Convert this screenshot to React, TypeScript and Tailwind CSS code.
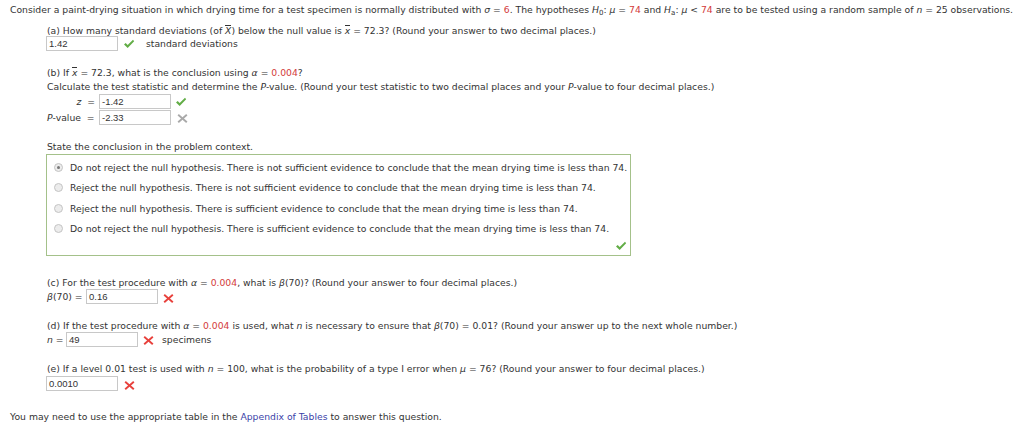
import React from "react"

const font = { fontFamily: '"DejaVu Sans", Verdana, sans-serif' }

function Check({ className = "" }: { className?: string }) {
    return (
        <svg viewBox="0 0 14 12" className={"w-[12px] h-[10px] " + className}>
            <path d="M1 6.5 L3 4.8 L5.4 7.2 L11.8 1 L13.2 2.6 L5.4 10.8 Z" fill="#62ad46" />
        </svg>
    )
}

function Cross({ red = true }: { red?: boolean }) {
    return (
        <svg viewBox="0 0 12 12" className="w-[11px] h-[11px]">
            <path d="M2 1 L6 4.6 L10 1 L11.4 2.6 L7.6 6 L11.4 9.4 L10 11 L6 7.4 L2 11 L0.6 9.4 L4.4 6 L0.6 2.6 Z" fill={red ? "#e8413c" : "#a9a9a9"} />
        </svg>
    )
}

function Input({ value }: { value: string }) {
    return (
        <div className="w-[72px] h-[15px] shrink-0 border border-[#c8c8c8] bg-white px-[2px] leading-[13px] text-[9.5px] text-[#333]" style={{ fontFamily: '"Liberation Sans", Arial, sans-serif' }}>
            {value}
        </div>
    )
}

const Red = ({ children }: { children: React.ReactNode }) => <span className="text-[#d33a3a]">{children}</span>
const I = ({ children }: { children: React.ReactNode }) => <span className="italic">{children}</span>
const Sub = ({ children }: { children: React.ReactNode }) => <span className="relative top-[2px] text-[7px] leading-none">{children}</span>
const Bar = ({ children }: { children: React.ReactNode }) => (
    <span className="relative italic">
        {children}
        <span className="absolute left-0 right-0 top-0 border-t border-[#333]" />
    </span>
)

function Radio({ on = false }: { on?: boolean }) {
    return (
        <span className="w-[9px] h-[9px] rounded-full border border-[#c4c4c4] bg-[#ececec] flex items-center justify-center shrink-0">
            {on && <span className="w-[3px] h-[3px] rounded-full bg-[#777]" />}
        </span>
    )
}

export default function App() {
    const options = [
        "Do not reject the null hypothesis. There is not sufficient evidence to conclude that the mean drying time is less than 74.",
        "Reject the null hypothesis. There is not sufficient evidence to conclude that the mean drying time is less than 74.",
        "Reject the null hypothesis. There is sufficient evidence to conclude that the mean drying time is less than 74.",
        "Do not reject the null hypothesis. There is sufficient evidence to conclude that the mean drying time is less than 74.",
    ]
    return (
        <div className="w-[1024px] h-[430px] bg-white text-[#333] text-[9.25px] leading-[11px] overflow-hidden" style={font}>
            <div className="pl-[10px] pt-[4px] whitespace-nowrap">
                Consider a paint-drying situation in which drying time for a test specimen is normally distributed with <I>σ</I> = <Red>6</Red>. The hypotheses <I>H</I><Sub>0</Sub>: <I>μ</I> = <Red>74</Red> and <I>H</I><Sub>a</Sub>: <I>μ</I> &lt; <Red>74</Red> are to be tested using a random sample of <I>n</I> = 25 observations.
            </div>

            <div className="pl-[47px]">
                {/* (a) */}
                <div className="mt-[10px]">
                    (a) How many standard deviations (of <Bar>X</Bar>) below the null value is <Bar>x</Bar> = 72.3? (Round your answer to two decimal places.)
                </div>
                <div className="flex items-center -ml-[1px]">
                    <Input value="1.42" />
                    <Check className="ml-[5px]" />
                    <span className="ml-[11px]">standard deviations</span>
                </div>

                {/* (b) */}
                <div className="mt-[16px]">
                    (b) If <Bar>x</Bar> = 72.3, what is the conclusion using <I>α</I> = <Red>0.004</Red>?
                </div>
                <div className="mt-[3px]">
                    Calculate the test statistic and determine the <I>P</I>-value. (Round your test statistic to two decimal places and your <I>P</I>-value to four decimal places.)
                </div>
                <div className="flex items-center mt-[2px]">
                    <span className="w-[52px] text-right pr-[4px]"><I>z</I> &nbsp;=</span>
                    <Input value="-1.42" />
                    <Check className="ml-[4px]" />
                </div>
                <div className="flex items-center mt-[1px]">
                    <span className="w-[52px] pr-[3px] whitespace-nowrap"><I>P</I>-value &nbsp;=</span>
                    <Input value="-2.33" />
                    <span className="ml-[6px] mt-[2px]"><Cross red={false} /></span>
                </div>

                {/* conclusion */}
                <div className="mt-[16px]">State the conclusion in the problem context.</div>
                <div className="mt-[2px] -ml-[1px] w-[585px] h-[102px] border border-[#a4c18a] pl-[7px] pt-[2px] relative">
                    {options.map((o, i) => (
                        <div key={i} className="flex items-center gap-[7px] h-[20.5px]">
                            <Radio on={i === 0} />
                            <span className="whitespace-nowrap">{o}</span>
                        </div>
                    ))}
                    <Check className="absolute right-[3px] bottom-[4px]" />
                </div>

                {/* (c) */}
                <div className="mt-[21px]">
                    (c) For the test procedure with <I>α</I> = <Red>0.004</Red>, what is <I>β</I>(70)? (Round your answer to four decimal places.)
                </div>
                <div className="flex items-center mt-[1px]">
                    <span className="w-[39px] whitespace-nowrap"><I>β</I>(70) =</span>
                    <Input value="0.16" />
                    <span className="ml-[5px] mt-[3px]"><Cross /></span>
                </div>

                {/* (d) */}
                <div className="mt-[16px]">
                    (d) If the test procedure with <I>α</I> = <Red>0.004</Red> is used, what <I>n</I> is necessary to ensure that <I>β</I>(70) = 0.01? (Round your answer up to the next whole number.)
                </div>
                <div className="flex items-center mt-[1px]">
                    <span className="w-[19px] whitespace-nowrap"><I>n</I> =</span>
                    <Input value="49" />
                    <span className="ml-[5px] mt-[2px]"><Cross /></span>
                    <span className="ml-[8px]">specimens</span>
                </div>

                {/* (e) */}
                <div className="mt-[16px]">
                    (e) If a level 0.01 test is used with <I>n</I> = 100, what is the probability of a type I error when <I>μ</I> = 76? (Round your answer to four decimal places.)
                </div>
                <div className="flex items-center mt-[2px] -ml-[1px]">
                    <Input value="0.0010" />
                    <span className="ml-[6px] mt-[3px]"><Cross /></span>
                </div>
            </div>

            <div className="pl-[10px] mt-[20px]">
                You may need to use the appropriate table in the <span className="text-[#3a3fa8]">Appendix of Tables</span> to answer this question.
            </div>
        </div>
    )
}
